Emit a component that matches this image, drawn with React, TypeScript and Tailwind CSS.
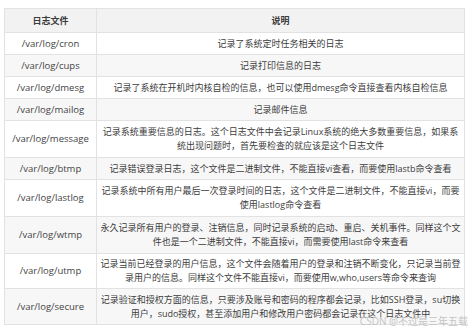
import React from "react";

type Row = { file: string; lines: string[]; h: string; gray: boolean };

const rows: Row[] = [
  { file: "/var/log/cron", lines: ["记录了系统定时任务相关的日志"], h: "h-[22px]", gray: false },
  { file: "/var/log/cups", lines: ["记录打印信息的日志"], h: "h-[22px]", gray: true },
  { file: "/var/log/dmesg", lines: ["记录了系统在开机时内核自检的信息，也可以使用dmesg命令直接查看内核自检信息"], h: "h-[22px]", gray: false },
  { file: "/var/log/mailog", lines: ["记录邮件信息"], h: "h-[22px]", gray: true },
  {
    file: "/var/log/message",
    lines: ["记录系统重要信息的日志。这个日志文件中会记录Linux系统的绝大多数重要信息，如果系", "统出现问题时，首先要检查的就应该是这个日志文件"],
    h: "h-[37px]",
    gray: false,
  },
  { file: "/var/log/btmp", lines: ["记录错误登录日志，这个文件是二进制文件，不能直接vi查看，而要使用lastb命令查看"], h: "h-[22px]", gray: true },
  {
    file: "/var/log/lastlog",
    lines: ["记录系统中所有用户最后一次登录时间的日志，这个文件是二进制文件，不能直接vi，而要", "使用lastlog命令查看"],
    h: "h-[37px]",
    gray: false,
  },
  {
    file: "/var/log/wtmp",
    lines: ["永久记录所有用户的登录、注销信息，同时记录系统的启动、重启、关机事件。同样这个文", "件也是一个二进制文件，不能直接vi，而需要使用last命令来查看"],
    h: "h-[37px]",
    gray: true,
  },
  {
    file: "/var/log/utmp",
    lines: ["记录当前已经登录的用户信息，这个文件会随着用户的登录和注销不断变化，只记录当前登", "录用户的信息。同样这个文件不能直接vi，而要使用w,who,users等命令来查询"],
    h: "h-[35px]",
    gray: false,
  },
  {
    file: "/var/log/secure",
    lines: ["记录验证和授权方面的信息，只要涉及账号和密码的程序都会记录，比如SSH登录，su切换", "用户，sudo授权，甚至添加用户和修改用户密码都会记录在这个日志文件中"],
    h: "h-[35px]",
    gray: true,
  },
];

export default function App() {
  return (
    <div
      className="relative w-[474px] h-[330px] overflow-hidden bg-white pt-[8px] pl-[4px] text-[#3c3c3c]"
      style={{ fontFamily: '"Open Sans", "Noto Sans CJK SC", sans-serif' }}
    >
      <div className="w-[461px] border border-[#e2e2e2] flex flex-col text-[9px] leading-[14px]">
        <div className="flex h-[24px] bg-[#f2f2f2] font-bold border-b border-[#e2e2e2]">
          <div className="w-[92px] shrink-0 flex items-center justify-center border-r border-[#e2e2e2]">日志文件</div>
          <div className="flex-1 flex items-center justify-center">说明</div>
        </div>
        {rows.map((r, i) => (
          <div
            key={r.file}
            className={`flex ${r.h} ${r.gray ? "bg-[#f7f7f7]" : "bg-white"} ${i < rows.length - 1 ? "border-b border-[#e2e2e2]" : ""}`}
          >
            <div className="w-[92px] shrink-0 flex items-center justify-center border-r border-[#e2e2e2] text-[9.5px] text-[#444]">
              {r.file}
            </div>
            <div className="flex-1 flex flex-col items-center justify-center whitespace-nowrap">
              {r.lines.map((l) => (
                <div key={l}>{l}</div>
              ))}
            </div>
          </div>
        ))}
      </div>
      <div className="absolute right-[6px] top-[314px] text-[10px] leading-[14px] text-[#c4c4c4] whitespace-nowrap">
        CSDN @不过是三年五载
      </div>
    </div>
  );
}
